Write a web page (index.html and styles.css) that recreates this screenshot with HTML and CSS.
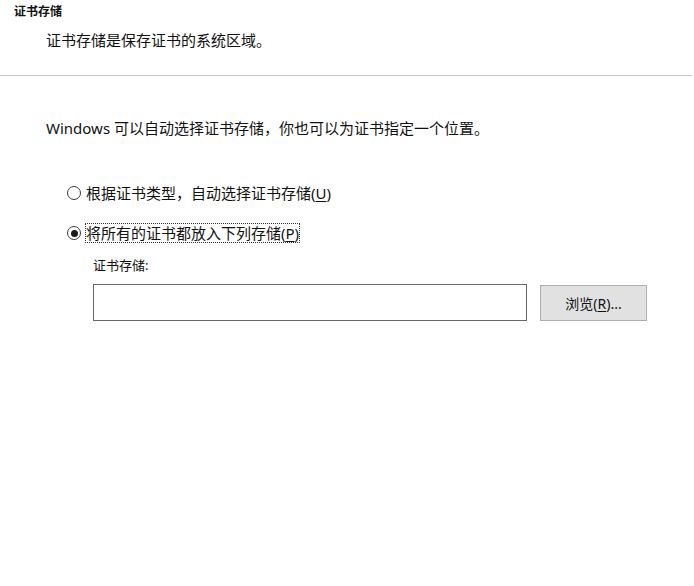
FILE: index.html
```html
<!DOCTYPE html>
<html lang="zh-CN">
<head>
  <meta charset="UTF-8" />
  <title>证书导入向导</title>
  <link rel="stylesheet" href="styles.css">
</head>
<body>
  <div id="header">
    <div class="title">证书存储</div>
    <div class="subtitle">证书存储是保存证书的系统区域。</div>
  </div>

  <div id="content">
    <div class="intro">Windows 可以自动选择证书存储，你也可以为证书指定一个位置。</div>

    <div class="options">
      <label class="option">
        <span class="radio"></span>
        <span class="option-text">根据证书类型，自动选择证书存储(<u>U</u>)</span>
      </label>
      <label class="option">
        <span class="radio checked"></span>
        <span class="option-text focused">将所有的证书都放入下列存储(<u>P</u>)</span>
      </label>
    </div>

    <div class="store">
      <div class="store-label">证书存储:</div>
      <div class="store-row">
        <div class="store-input"></div>
        <button class="browse">浏览(<u>R</u>)...</button>
      </div>
    </div>
  </div>
</body>
</html>
```

FILE: styles.css
```css
body {
  margin: 0;
  background: #fff;
  color: #111;
  font-family: "Noto Sans", "Noto Sans CJK SC", sans-serif;
  font-size: 15px;
}
#header {
  padding: 4px 0 25px 0;
  border-bottom: 1px solid #c4c4c4;
  margin-right: 2px;
}
.title {
  padding-left: 14px;
  font-size: 12px;
  font-weight: bold;
  line-height: 16px;
}
.subtitle {
  margin-top: 10px;
  padding-left: 46px;
  line-height: 20px;
}
#content {
  padding-left: 46px;
}
.intro {
  margin-top: 42px;
  line-height: 20px;
}
.options {
  margin-top: 45px;
  margin-left: 21px;
  display: flex;
  flex-direction: column;
  gap: 20px;
}
.option {
  display: flex;
  align-items: center;
  height: 20px;
  line-height: 20px;
}
.radio {
  width: 12px;
  height: 12px;
  border: 1.5px solid #3a3a3a;
  border-radius: 50%;
  display: flex;
  align-items: center;
  justify-content: center;
  margin-right: 4px;
}
.radio.checked::after {
  content: "";
  width: 7px;
  height: 7px;
  border-radius: 50%;
  background: #1a1a1a;
}
.option-text {
  padding: 0 1px;
}
.option-text.focused {
  outline: 1px dotted #333;
  outline-offset: -1px;
}
u {
  text-underline-offset: 2px;
}
.store {
  margin-top: 12px;
  margin-left: 47px;
}
.store-label {
  font-size: 13px;
  line-height: 20px;
}
.store-row {
  margin-top: 9px;
  display: flex;
  align-items: center;
  gap: 13px;
}
.store-input {
  width: 432px;
  height: 35px;
  border: 1px solid #666;
  background: #fff;
}
.browse {
  width: 107px;
  height: 36px;
  background: #e1e1e1;
  border: 1px solid #adadad;
  font-family: inherit;
  font-size: 14px;
  color: #111;
  padding: 0;
}
```
